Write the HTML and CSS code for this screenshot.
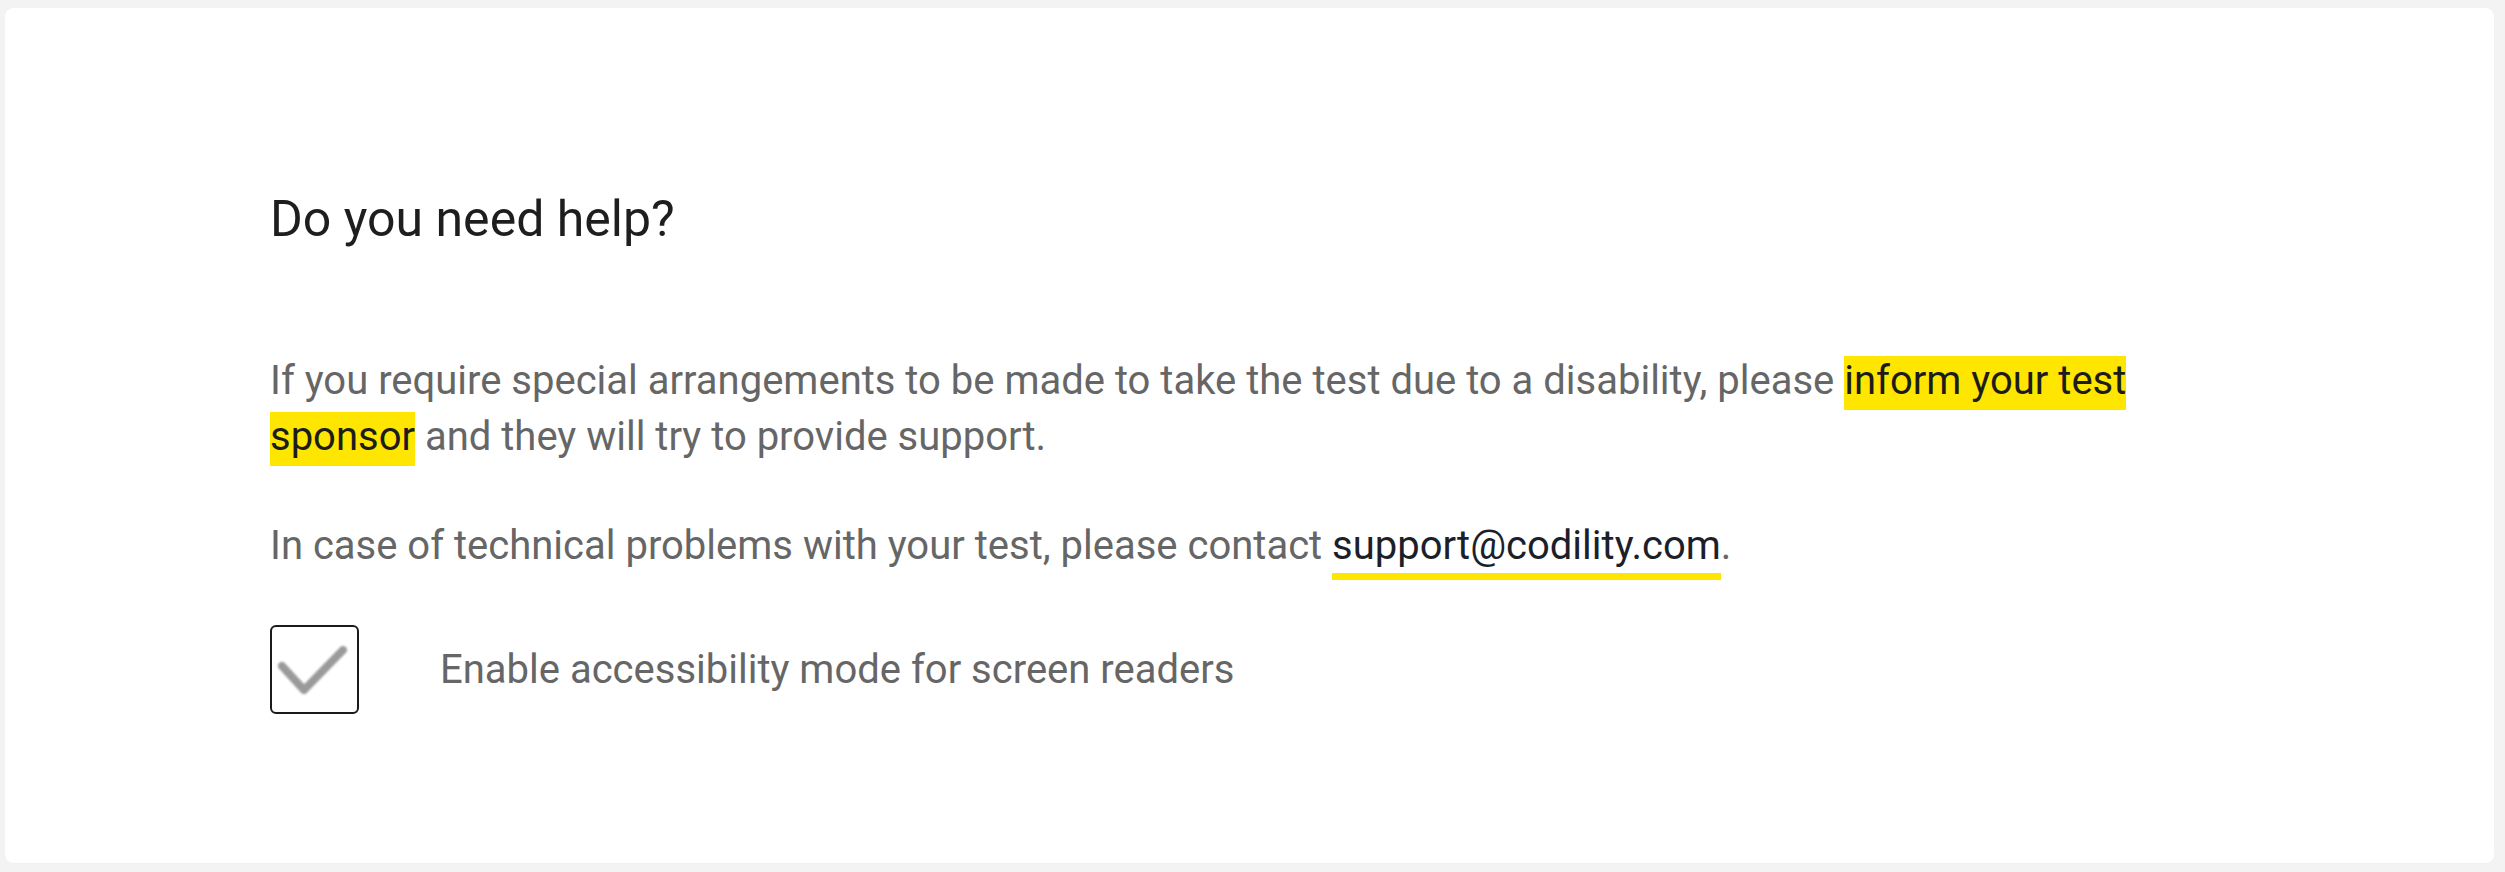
FILE: index.html
```html
<!DOCTYPE html>
<html lang="en">
<head>
<meta charset="utf-8">
<title>Do you need help?</title>
<link rel="stylesheet" href="styles.css">
</head>
<body>
<main class="page">
  <section class="card">
    <h1 class="title">Do you need help?</h1>
    <p class="text text-first">If you require special arrangements to be made to take the test due to a disability, please <span class="highlight">inform your test sponsor</span> and they will try to provide support.</p>
    <p class="text text-second">In case of technical problems with your test, please contact <a class="link" href="#">support@codility.com</a>.</p>
    <label class="check-row">
      <span class="checkbox">
        <svg class="check-icon" width="89" height="89" viewBox="0 0 89 89" aria-hidden="true">
          <polyline points="12,41 34,65 73,25" fill="none" stroke="#9a9a9a" stroke-width="8" stroke-linecap="round" stroke-linejoin="round"/>
        </svg>
      </span>
      <span class="check-label">Enable accessibility mode for screen readers</span>
    </label>
  </section>
</main>
</body>
</html>
```

FILE: styles.css
```css
html, body {
  margin: 0;
  padding: 0;
  background: #f3f3f3;
}

body {
  font-family: Roboto, "Liberation Sans", Arial, sans-serif;
}

.page {
  padding: 8px 11px 9px 5px;
  height: 872px;
  box-sizing: border-box;
}

.card {
  background: #ffffff;
  border-radius: 8px;
  height: 855px;
  box-sizing: border-box;
  padding: 183px 265px 0 265px;
  box-shadow: 0 0 1px rgba(0, 0, 0, 0.06);
}

.title {
  margin: 0;
  font-size: 50px;
  line-height: 56px;
  font-weight: 400;
  color: #1e1e1e;
}

.text {
  margin: 0;
  font-size: 40px;
  line-height: 56px;
  color: #666666;
}

.text-first {
  margin-top: 106px;
}

.text-second {
  margin-top: 53px;
}

.highlight {
  background: #ffe600;
  color: #1c1c1c;
  padding: 1px 0 6px 0;
}

.link {
  color: #1c1f2a;
  text-decoration: none;
  padding-bottom: 4px;
  border-bottom: 7px solid #ffe600;
}

.check-row {
  margin-top: 51px;
  display: flex;
  align-items: center;
  gap: 81px;
  cursor: pointer;
}

.checkbox {
  width: 89px;
  height: 89px;
  box-sizing: border-box;
  border: 2px solid #1a1a1a;
  border-radius: 6px;
  flex: none;
  position: relative;
}

.check-icon {
  position: absolute;
  left: -2px;
  top: -2px;
  filter: blur(1px);
}

.check-label {
  font-size: 40px;
  line-height: 56px;
  color: #666666;
}
```
